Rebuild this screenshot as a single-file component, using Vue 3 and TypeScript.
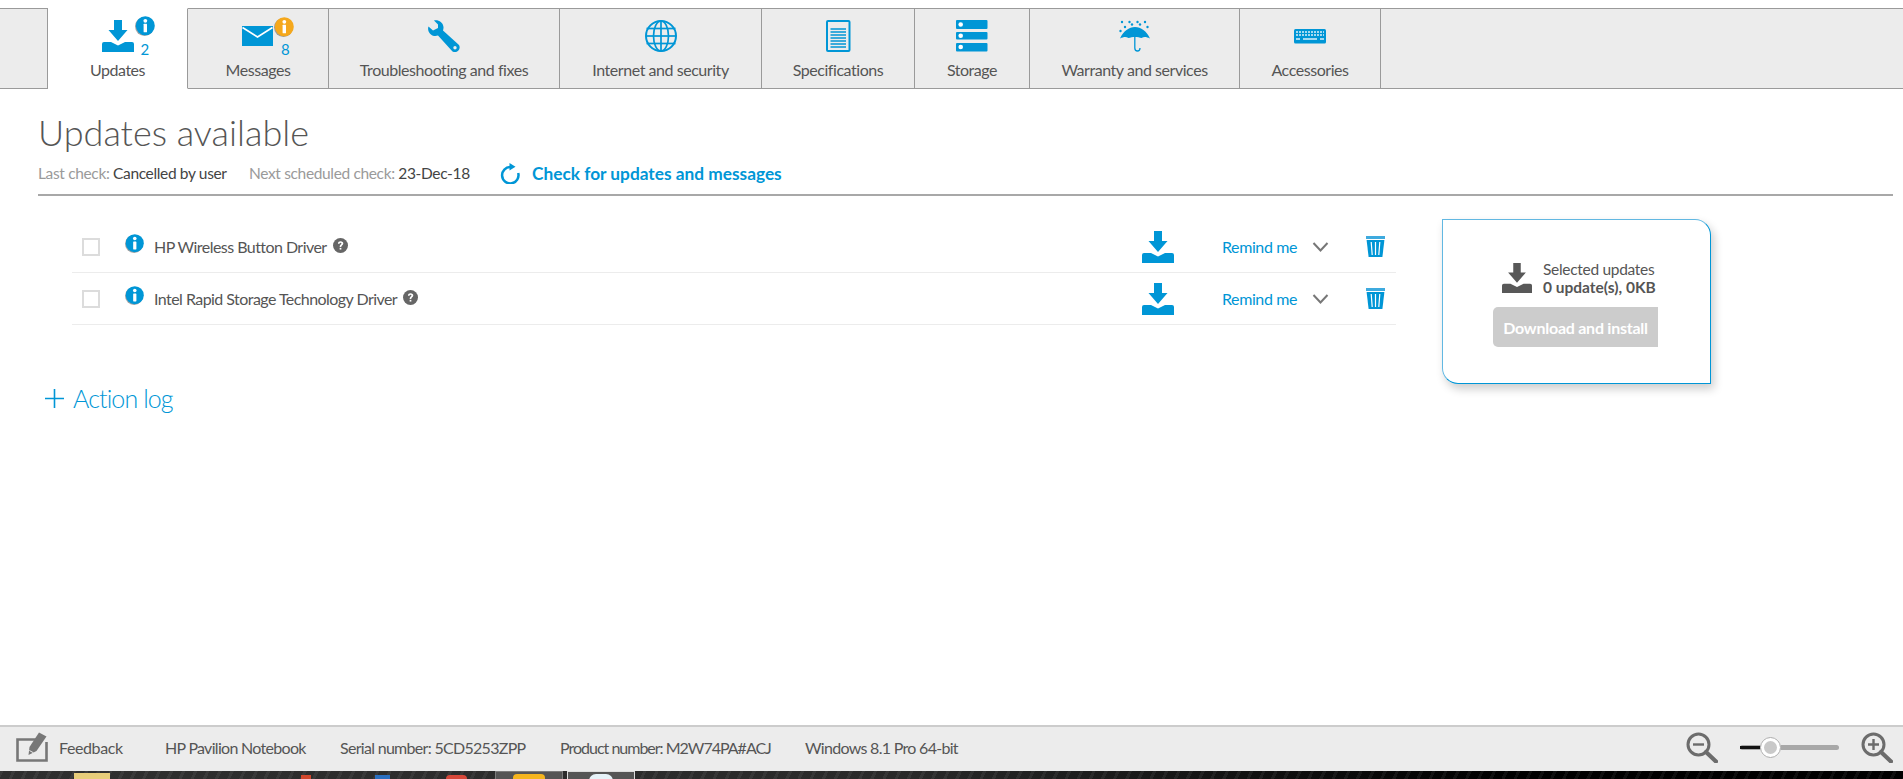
<script setup lang="ts">
const downloadArrow = "M12 0H20V10H25.5L16 21 6.5 10H12Z";
const downloadTray = "M0 32V24Q0 22 2 22H9L16 25.5 23 22H30Q32 22 32 24V32Z";

interface Tab {
  label: string;
  icon: string;
  badge?: "info" | "warn";
  count?: number;
}

const tabs: Tab[] = [
  { label: "Updates", icon: "download", badge: "info", count: 2 },
  { label: "Messages", icon: "mail", badge: "warn", count: 8 },
  { label: "Troubleshooting and fixes", icon: "wrench" },
  { label: "Internet and security", icon: "globe" },
  { label: "Specifications", icon: "doc" },
  { label: "Storage", icon: "storage" },
  { label: "Warranty and services", icon: "umbrella" },
  { label: "Accessories", icon: "keyboard" },
];

const drivers = ["HP Wireless Button Driver", "Intel Rapid Storage Technology Driver"];
const rain = [
  [3, 2], [10.5, 2], [18.5, 2], [26, 2],
  [6, 7], [28.5, 7], [1.5, 11], [13, 4.5], [21, 4.5],
];
const docLines = [9, 12, 15, 18, 21, 24, 27];
const globeLats = [8.5, 16, 23.5];
</script>

<template>
  <div class="app">
    <svg class="defs" aria-hidden="true">
      <symbol id="info" viewBox="0 0 20 20">
        <circle cx="9.5" cy="10.5" r="9.5" fill="#5a5a5a" opacity="0.55" />
        <circle cx="10.3" cy="9.7" r="9.5" fill="currentColor" />
        <circle cx="10.3" cy="4.8" r="1.9" fill="#fff" />
        <rect x="8.6" y="7.8" width="3.4" height="8.4" rx="0.5" fill="#fff" />
      </symbol>
      <symbol id="help" viewBox="0 0 14 14">
        <circle cx="7" cy="7" r="7" fill="#666" />
        <path d="M4.6 5.3C4.7 3.9 5.7 3.1 7.1 3.1 8.6 3.1 9.6 4 9.6 5.1 9.6 6.6 7.7 6.8 7.7 8.3H6.2C6.2 6.2 7.9 6.1 7.9 5.2 7.9 4.7 7.6 4.4 7 4.4 6.5 4.4 6.2 4.7 6.1 5.3Z" fill="#fff" />
        <rect x="6.2" y="9.2" width="1.6" height="1.6" fill="#fff" />
      </symbol>
      <symbol id="trash" viewBox="0 0 19 21">
        <rect width="19" height="3" fill="#3eaade" />
        <path d="M0.6 4H18.4L16.4 21H2.6Z" fill="#0096d6" />
        <path d="M5.2 6 6.2 19M9.5 6V19M13.8 6 12.8 19" stroke="#fff" stroke-width="1.2" fill="none" />
      </symbol>
    </svg>

    <nav class="tabs">
      <div class="tab-spacer" />
      <div v-for="(tab, i) in tabs" :key="tab.label" class="tab" :class="{ active: i === 0 }">
        <div class="tab-icon">
          <svg v-if="tab.icon === 'download'" viewBox="0 0 32 32" class="ico32" fill="currentColor">
            <path :d="downloadArrow" />
            <path :d="downloadTray" />
          </svg>
          <svg v-else-if="tab.icon === 'mail'" viewBox="0 0 32 32" class="ico32" fill="currentColor">
            <rect y="6" width="31" height="20" />
            <path d="M0.5 7.5 15.5 17 30.5 7.5" fill="none" stroke="#fff" stroke-width="1.6" />
          </svg>
          <svg v-else-if="tab.icon === 'wrench'" viewBox="0 0 32 32" class="ico32" fill="currentColor">
            <path
              fill-rule="evenodd"
              d="M6 0.5C10 -0.5 15 2 15.5 7 15.6 8.5 15.3 9.5 15 10.5L31 25A4.8 4.8 0 0 1 24.5 31.5L10 15.5C6 17 1.5 15 0.3 10.5 0 9 0 7.5 0.5 6.5L5 10.5 10 8 10 4.5ZM27 26A1.7 1.7 0 1 0 27 29.4 1.7 1.7 0 1 0 27 26Z"
            />
          </svg>
          <svg v-else-if="tab.icon === 'globe'" viewBox="0 0 32 32" class="ico32" fill="none" stroke="currentColor" stroke-width="1.7">
            <circle cx="16" cy="16" r="15" stroke-width="2" />
            <ellipse cx="16" cy="16" rx="7.5" ry="15" />
            <path d="M16 1V31" />
            <path v-for="y in globeLats" :key="y" :d="`M1.5 ${y}H30.5`" />
          </svg>
          <svg v-else-if="tab.icon === 'doc'" viewBox="0 0 32 32" class="ico32" fill="none" stroke="currentColor">
            <rect x="5" y="1" width="22.5" height="30" rx="1" stroke-width="2" />
            <path v-for="y in docLines" :key="y" :d="`M8.5 ${y}H24`" stroke-width="1.5" />
          </svg>
          <svg v-else-if="tab.icon === 'storage'" viewBox="0 0 32 32" class="ico32" fill="currentColor">
            <rect width="31.5" height="9" rx="1" />
            <rect y="12" width="31.5" height="7.5" rx="1" />
            <rect y="23" width="31.5" height="8.5" rx="1" />
            <circle cx="4.7" cy="4.5" r="2.3" fill="#fff" />
            <circle cx="4.7" cy="15.8" r="2.3" fill="#fff" />
            <circle cx="4.7" cy="27" r="2.3" fill="#fff" />
          </svg>
          <svg v-else-if="tab.icon === 'umbrella'" viewBox="0 0 32 32" class="ico32" fill="currentColor">
            <circle v-for="p in rain" :key="p.join()" :cx="p[0]" :cy="p[1]" r="1.2" />
            <path d="M1 18.5C4.5 11 10 7 16 7 22 7 27.5 11 31 18.5 27 16.5 25 16.5 22.5 18 19 16.5 13 16.5 9.5 18 7 16.5 5 16.5 1 18.5Z" />
            <path d="M15.8 17V28Q15.8 31 18.5 31 21 31 21 28" fill="none" stroke="currentColor" stroke-width="1.3" />
          </svg>
          <svg v-else viewBox="0 0 32 32" class="ico32" fill="currentColor">
            <rect y="9" width="32" height="14.5" rx="1.5" />
            <path d="M2 12H30M2 15H30" stroke="#fff" stroke-width="1.5" stroke-dasharray="2 1" opacity="0.85" />
            <path d="M2 19H6M9 19H23M26 19H30" stroke="#fff" stroke-width="1.5" opacity="0.85" />
          </svg>
          <svg v-if="tab.badge" class="tab-badge" :class="tab.badge"><use href="#info" /></svg>
          <span v-if="tab.count" class="tab-count">{{ tab.count }}</span>
        </div>
        <span class="tab-label">{{ tab.label }}</span>
      </div>
      <div class="tab-rest" />
    </nav>

    <main class="main">
      <h1 class="title">Updates available</h1>
      <div class="meta">
        <span class="meta-item last"><span class="muted">Last check:</span> Cancelled by user</span>
        <span class="meta-item next"><span class="muted">Next scheduled check:</span> 23-Dec-18</span>
        <svg class="refresh" viewBox="0 0 20 21" fill="none" stroke="currentColor">
          <path d="M10.5 4A8.2 8.2 0 1 0 18.2 10" stroke-width="2.5" />
          <path d="M9.5 0 15.5 3.8 9.5 7.5Z" fill="currentColor" stroke="none" />
        </svg>
        <span class="check-link">Check for updates and messages</span>
      </div>

      <div class="content">
        <ul class="list">
          <li v-for="name in drivers" :key="name" class="row">
            <span class="checkbox" />
            <svg class="row-info"><use href="#info" /></svg>
            <span class="row-name">{{ name }}</span>
            <svg class="row-help"><use href="#help" /></svg>
            <svg class="row-download" viewBox="0 0 32 32" fill="currentColor">
              <path :d="downloadArrow" />
              <path :d="downloadTray" />
            </svg>
            <span class="remind">Remind me</span>
            <svg class="chevron" viewBox="0 0 16 10" fill="none" stroke="#777" stroke-width="2">
              <path d="M1 1 8 8.5 15 1" />
            </svg>
            <svg class="row-trash"><use href="#trash" /></svg>
          </li>
        </ul>

        <aside class="panel">
          <div class="panel-summary">
            <svg class="panel-icon" viewBox="0 0 32 32" fill="#585858">
              <path :d="downloadArrow" />
              <path :d="downloadTray" />
            </svg>
            <div class="panel-text">
              <div>Selected updates</div>
              <div class="panel-count">0 update(s), 0KB</div>
            </div>
          </div>
          <button class="install" type="button">Download and install</button>
        </aside>
      </div>

      <div class="action-log">
        <svg class="plus" viewBox="0 0 19 19" stroke="currentColor" stroke-width="1.6">
          <path d="M9.5 0V19M0 9.5H19" />
        </svg>
        <span>Action log</span>
      </div>
    </main>

    <footer class="footer">
      <svg class="feedback-icon" viewBox="0 0 32 30" fill="none">
        <path d="M20 7.5H1.5V28.5H30.5V10" stroke="#777" stroke-width="2.6" />
        <path d="M12.5 23 13.5 15 23 0.5 30.5 4.5 20.5 19Z" fill="#777" />
        <path d="M13.4 18.5 17.5 20.8" stroke="#ececec" stroke-width="1" />
      </svg>
      <span class="feedback">Feedback</span>
      <span>HP Pavilion Notebook</span>
      <span>Serial number: 5CD5253ZPP</span>
      <span class="product">Product number: M2W74PA#ACJ</span>
      <span>Windows 8.1 Pro 64-bit</span>
      <div class="zoom">
        <svg class="zoom-icon" viewBox="0 0 32 31" fill="none" stroke="#6c6c6c">
          <circle cx="12.5" cy="12.5" r="10.5" stroke-width="3" />
          <path d="M20 20 30 29.5" stroke-width="4.2" stroke-linecap="round" />
          <path d="M7 12.5H18" stroke-width="2.4" />
        </svg>
        <div class="slider">
          <span class="slider-fill" />
          <span class="slider-thumb" />
        </div>
        <svg class="zoom-icon" viewBox="0 0 32 31" fill="none" stroke="#6c6c6c">
          <circle cx="12.5" cy="12.5" r="10.5" stroke-width="3" />
          <path d="M20 20 30 29.5" stroke-width="4.2" stroke-linecap="round" />
          <path d="M7 12.5H18M12.5 7V18" stroke-width="2.4" />
        </svg>
      </div>
    </footer>

    <div class="taskbar">
      <span class="task-folder" />
      <span class="task-dot red" />
      <span class="task-dot blue" />
      <span class="task-dot chrome" />
      <span class="task-tile"><i class="amber" /></span>
      <span class="task-tile current"><i class="white" /></span>
    </div>
  </div>
</template>

<style>
html,
body {
  margin: 0;
  background: #fff;
  overflow: hidden;
}
</style>

<style scoped>
.app {
  display: flex;
  flex-direction: column;
  height: 100vh;
  padding-top: 8px;
  box-sizing: border-box;
  font-family: Lato, "Open Sans", sans-serif;
  font-size: 16px;
  color: #555;
  background: #fff;
}

.defs {
  position: absolute;
  width: 0;
  height: 0;
}

.tabs {
  display: grid;
  grid-template-columns: 48px 140px 141px 231px 202px 153px 115px 210px 141px 1fr;
  height: 81px;
  flex: none;
}

.tab-spacer,
.tab,
.tab-rest {
  background: #ececec;
  box-sizing: border-box;
  border-top: 1px solid #9a9a9a;
  border-bottom: 1px solid #9a9a9a;
}

.tab-spacer,
.tab {
  border-right: 1px solid #9a9a9a;
}

.tab {
  display: flex;
  flex-direction: column;
  align-items: center;
  padding-top: 11px;
}

.tab.active {
  background: #fff;
  border-top-color: #fff;
  border-bottom-color: #fff;
}

.tab-icon {
  position: relative;
  width: 32px;
  height: 32px;
  color: #0096d6;
}

.ico32 {
  display: block;
  width: 32px;
  height: 32px;
}

.tab-badge {
  position: absolute;
  left: 33px;
  top: -4px;
  width: 20px;
  height: 20px;
  color: #0096d6;
}

.tab-badge.warn {
  color: #f5a81c;
  left: 32px;
  top: -3px;
}

.tab-count {
  position: absolute;
  left: 39px;
  top: 22px;
  font-size: 15px;
  line-height: 15px;
}

.tab-label {
  margin-top: 9px;
  line-height: 18px;
  letter-spacing: -0.45px;
  white-space: nowrap;
}

.main {
  flex: 1;
  min-height: 0;
  padding: 20px 10px 0 38px;
}

.title {
  margin: 0;
  font-size: 36px;
  font-weight: 300;
  line-height: 46px;
  color: #555;
}

.meta {
  display: flex;
  align-items: center;
  height: 30px;
  margin-top: 3px;
  padding-bottom: 6px;
  border-bottom: 2px solid #a8a8a8;
  color: #444;
  font-size: 15.5px;
  letter-spacing: -0.35px;
}

.muted {
  color: #9a9a9a;
}

.meta-item.last {
  width: 211px;
}

.meta-item.next {
  width: 251px;
}

.refresh {
  width: 20px;
  height: 21px;
  color: #0096d6;
  margin-right: 12px;
}

.check-link {
  color: #0096d6;
  font-weight: 700;
  font-size: 17.3px;
  letter-spacing: 0;
}

.content {
  display: flex;
  align-items: flex-start;
  margin-top: 23px;
  padding-left: 34px;
}

.list {
  list-style: none;
  width: 1324px;
  margin: 2px 46px 0 0;
  padding: 0;
  flex: none;
}

.row {
  display: flex;
  align-items: center;
  height: 51px;
  border-bottom: 1px solid #ececec;
}

.checkbox {
  width: 14px;
  height: 14px;
  margin-left: 10px;
  border: 2px solid #dcdcdc;
  flex: none;
}

.row-info {
  width: 19px;
  height: 19px;
  margin: -6px 0 0 25px;
  color: #0096d6;
  flex: none;
}

.row-name {
  margin-left: 10px;
  font-size: 16px;
  letter-spacing: -0.55px;
  white-space: nowrap;
}

.row-help {
  width: 15px;
  height: 15px;
  margin-left: 6px;
  margin-top: -2px;
  flex: none;
}

.row-download {
  width: 32px;
  height: 32px;
  margin-left: auto;
  color: #0096d6;
  flex: none;
}

.remind {
  width: 75px;
  margin-left: 48px;
  color: #0096d6;
  letter-spacing: -0.4px;
  white-space: nowrap;
}

.chevron {
  width: 17px;
  height: 10px;
  margin-left: 15px;
  flex: none;
}

.row-trash {
  width: 19px;
  height: 21px;
  margin: 0 11px 0 37px;
  flex: none;
}

.panel {
  width: 269px;
  height: 165px;
  box-sizing: border-box;
  flex: none;
  border: 1px solid #0096d6;
  border-left-color: #62b8e2;
  border-top-color: #62b8e2;
  border-radius: 0 16px 0 16px;
  box-shadow: 3px 5px 10px rgba(0, 0, 0, 0.2);
  padding: 43px 0 0 50px;
}

.panel-summary {
  display: flex;
  align-items: center;
  padding-left: 9px;
  height: 30px;
}

.panel-icon {
  width: 30px;
  height: 30px;
  flex: none;
}

.panel-text {
  margin-left: 11px;
  font-size: 15.5px;
  line-height: 18px;
  letter-spacing: -0.3px;
  white-space: nowrap;
}

.panel-count {
  font-weight: 700;
  letter-spacing: 0;
}

.install {
  display: block;
  width: 165px;
  height: 40px;
  margin-top: 14px;
  padding: 0;
  border: 0;
  border-radius: 5px 0 0 5px;
  background: #ccc;
  color: #fff;
  font: 700 16px Lato, "Open Sans", sans-serif;
  letter-spacing: -0.25px;
}

.action-log {
  display: flex;
  align-items: center;
  gap: 9px;
  margin: -1px 0 0 7px;
  height: 30px;
  color: #0096d6;
  font-size: 25px;
  font-weight: 300;
  letter-spacing: -0.9px;
}

.plus {
  width: 19px;
  height: 19px;
}

.footer {
  display: grid;
  grid-template-columns: 43px 106px 175px 220px 245px 1fr auto;
  align-items: center;
  flex: none;
  height: 46px;
  box-sizing: border-box;
  padding: 0 10px 4px 16px;
  background: #ececec;
  border-top: 2px solid #ccc;
  font-size: 16px;
  letter-spacing: -0.7px;
  white-space: nowrap;
}

.feedback {
  letter-spacing: -0.4px;
}

.product {
  letter-spacing: -1px;
}

.feedback-icon {
  width: 32px;
  height: 30px;
}

.zoom {
  display: flex;
  align-items: center;
  gap: 22px;
}

.zoom-icon {
  width: 32px;
  height: 31px;
}

.slider {
  position: relative;
  width: 99px;
  height: 5px;
  border-radius: 3px;
  background: #a8a8a8;
}

.slider-fill {
  position: absolute;
  left: 0;
  top: 1px;
  width: 22px;
  height: 3px;
  background: #111;
}

.slider-thumb {
  position: absolute;
  left: 20px;
  top: -8px;
  width: 21px;
  height: 21px;
  box-sizing: border-box;
  border-radius: 50%;
  border: 4px solid #fff;
  outline: 1px solid #aaa;
  outline-offset: -1px;
  background: #c9c9c9;
}

.taskbar {
  display: flex;
  flex: none;
  height: 8px;
  overflow: hidden;
  background:
    repeating-linear-gradient(115deg, rgba(255, 255, 255, 0.06) 0 3px, transparent 3px 11px),
    linear-gradient(90deg, #2f2f2f 0, #2a2a2a 900px, #000 1500px);
}

.task-folder {
  width: 36px;
  height: 6px;
  margin: 2px 0 0 74px;
  background: #e8cd7a;
}

.task-dot {
  height: 4px;
  margin-top: 4px;
}

.task-dot.red {
  width: 10px;
  margin-left: 191px;
  background: #d2472c;
}

.task-dot.blue {
  width: 15px;
  margin-left: 64px;
  background: #2a6fc0;
}

.task-dot.chrome {
  width: 21px;
  margin-left: 56px;
  border-radius: 10px 10px 0 0;
  background: #d8483a;
}

.task-tile {
  display: flex;
  justify-content: center;
  width: 68px;
  height: 8px;
  margin-left: 28px;
  box-sizing: border-box;
  border: 1px solid #7c7c7c;
  border-bottom: 0;
  background: #555;
}

.task-tile i {
  display: block;
  width: 32px;
  height: 7px;
  margin-top: 2px;
  border-radius: 4px 4px 0 0;
}

.task-tile .amber {
  background: #f5b51e;
}

.task-tile .white {
  background: #e6f2f8;
  width: 24px;
  border-radius: 12px 12px 0 0;
}

.task-tile.current {
  margin-left: 4px;
  border-color: #ddd;
}
</style>
